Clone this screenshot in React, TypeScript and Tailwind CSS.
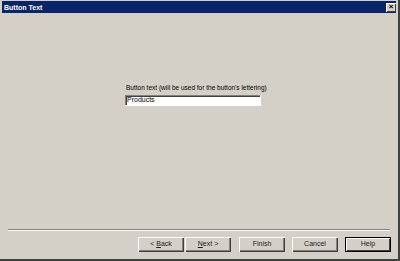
import React from 'react';

const font = { fontFamily: '"Liberation Sans", Arial, sans-serif' };

const Btn = ({ children, def }: { children: React.ReactNode; def?: boolean }) => (
  <div
    className={`w-[46px] h-[15px] flex items-center justify-center bg-[#d4d0c8] text-[7px] text-[#202020] ${
      def ? 'border border-black shadow-[inset_1px_1px_0_#fff,inset_-1px_-1px_0_#404040]' : 'shadow-[inset_1px_1px_0_#fff,inset_-1px_-1px_0_#404040,inset_-2px_-2px_0_#808080]'
    }`}
  >
    {children}
  </div>
);

export default function App() {
  return (
    <div className="w-[400px] h-[261px] bg-[#d4d0c8] flex flex-col border-r-2 border-b-2 border-r-[#404040] border-b-[#404040] px-[2px] pt-[1px]" style={font}>
      {/* Title bar */}
      <div className="h-[12px] bg-[#0a246a] flex items-center justify-between pl-[2px] pr-0">
        <span className="text-[7px] font-bold text-white leading-none">Button Text</span>
        <div className="w-[10px] h-[9px] bg-[#d4d0c8] flex items-center justify-center shadow-[inset_1px_1px_0_#fff,inset_-1px_-1px_0_#404040] text-[8px] font-bold leading-none text-black">
          ×
        </div>
      </div>

      {/* Body */}
      <div className="flex-1 flex flex-col">
        <div className="pt-[71px] pl-[124px]">
          <div className="text-[6.5px] leading-[8px] text-black">Button text (will be used for the button's lettering)</div>
          <div className="mt-[3px] -ml-[1px] w-[136px] h-[11px] bg-white flex items-center pl-[2px] text-[7px] text-black shadow-[inset_1px_1px_0_#808080,inset_2px_2px_0_#404040] border-r border-b border-white">
            Products
          </div>
        </div>

        <div className="mt-auto mx-[6px] h-[2px] border-t border-[#808080] border-b border-b-white" />
        <div className="flex justify-end pr-[5px] pt-[6px] pb-[7px]">
          <Btn><span>&lt; <u>B</u>ack</span></Btn>
          <div className="w-[1px]" />
          <Btn><span><u>N</u>ext &gt;</span></Btn>
          <div className="w-[8px]" />
          <Btn>Finish</Btn>
          <div className="w-[7px]" />
          <Btn>Cancel</Btn>
          <div className="w-[7px]" />
          <Btn def>Help</Btn>
        </div>
      </div>
    </div>
  );
}
